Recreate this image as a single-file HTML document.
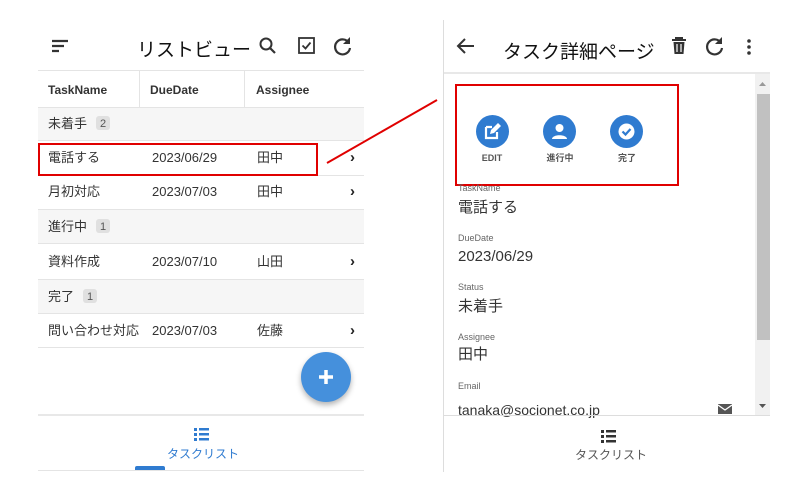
<!DOCTYPE html><html><head><meta charset="utf-8"><style>
*{margin:0;padding:0;box-sizing:border-box}
body{width:800px;height:496px;background:#fff;position:relative;font-family:"Liberation Sans","Noto Sans CJK JP",sans-serif;overflow:hidden;color:#333}
.a{position:absolute;line-height:16px}
.t{font-size:13px;color:#333;line-height:16px}
.row{position:absolute;left:38px;width:326px;border-bottom:1px solid #e4e4e4}
.row span{position:absolute;line-height:16px;white-space:nowrap}
.grp{background:#f6f6f6}
.badge{display:inline-block;background:#e0e0e0;border-radius:3px;padding:0 4px;font-size:11px;line-height:14px;height:14px;margin-left:9px;color:#555;vertical-align:1px}
.chev{left:312px;font-size:15px;font-weight:bold;color:#222}
.lbl{position:absolute;left:458px;font-size:9px;color:#666;line-height:10px}
.val{position:absolute;left:458px;font-size:15px;color:#333;line-height:18px}
.circ{position:absolute;width:33px;height:33px;border-radius:50%;background:#2f7bd0}
.cl{position:absolute;font-size:9px;font-weight:bold;color:#555;width:60px;text-align:center;line-height:10px}
</style></head><body>
<!-- left -->
<svg class="a" style="left:50px;top:38px" width="20" height="16"><path d="M2 3h16M2 8h12M2 13h7" stroke="#333" stroke-width="2.2"/></svg>
<div class="a" style="left:137px;top:39px;font-size:19px;color:#111;line-height:24px">リストビュー</div>
<svg class="a" style="left:258px;top:36px" width="20" height="20"><circle cx="8" cy="8" r="5.5" fill="none" stroke="#333" stroke-width="2"/><path d="M12 12l5 5" stroke="#333" stroke-width="2.2"/></svg>
<svg class="a" style="left:297px;top:36px" width="20" height="20"><rect x="2" y="2" width="15" height="15" fill="none" stroke="#333" stroke-width="1.8"/><path d="M5.5 9.5l3 3 5-6" fill="none" stroke="#333" stroke-width="1.8"/></svg>
<svg class="a" style="left:332px;top:35px" width="22" height="22"><path d="M17 8A7.5 7.5 0 1 0 18 13" fill="none" stroke="#333" stroke-width="2.2"/><path d="M18 2v7h-7z" fill="#333"/></svg>
<div class="a" style="left:38px;top:70px;width:326px;height:1px;background:#e4e4e4"></div>
<div class="row" style="top:71px;height:37px"><span style="left:10px;top:11px;font-size:12px;font-weight:bold">TaskName</span><span style="left:112px;top:11px;font-size:12px;font-weight:bold">DueDate</span><span style="left:218px;top:11px;font-size:12px;font-weight:bold">Assignee</span><div class="a" style="left:101px;top:0;width:1px;height:36px;background:#e4e4e4"></div><div class="a" style="left:206px;top:0;width:1px;height:36px;background:#e4e4e4"></div></div>
<div class="row grp" style="top:108px;height:33px"><span class="t" style="left:10px;top:8px">未着手<span class="badge" style="position:static">2</span></span></div>
<div class="row" style="top:141px;height:35px"><span class="t" style="left:10px;top:9px">電話する</span><span class="t" style="left:114px;top:9px">2023/06/29</span><span class="t" style="left:219px;top:9px">田中</span><span class="chev" style="top:9px">›</span></div>
<div class="row" style="top:176px;height:34px"><span class="t" style="left:10px;top:8px">月初対応</span><span class="t" style="left:114px;top:8px">2023/07/03</span><span class="t" style="left:219px;top:8px">田中</span><span class="chev" style="top:8px">›</span></div>
<div class="row grp" style="top:210px;height:34px"><span class="t" style="left:10px;top:9px">進行中<span class="badge" style="position:static">1</span></span></div>
<div class="row" style="top:244px;height:36px"><span class="t" style="left:10px;top:10px">資料作成</span><span class="t" style="left:114px;top:10px">2023/07/10</span><span class="t" style="left:219px;top:10px">山田</span><span class="chev" style="top:10px">›</span></div>
<div class="row grp" style="top:280px;height:34px"><span class="t" style="left:10px;top:9px">完了<span class="badge" style="position:static">1</span></span></div>
<div class="row" style="top:314px;height:34px"><span class="t" style="left:10px;top:9px">問い合わせ対応</span><span class="t" style="left:114px;top:9px">2023/07/03</span><span class="t" style="left:219px;top:9px">佐藤</span><span class="chev" style="top:9px">›</span></div>
<div class="a" style="left:38px;top:143px;width:280px;height:33px;border:2px solid #e00000"></div>
<div class="a" style="left:301px;top:352px;width:50px;height:50px;border-radius:50%;background:#4590dc;box-shadow:0 3px 6px rgba(0,0,0,.3)"></div>
<svg class="a" style="left:316px;top:367px" width="20" height="20"><path d="M10 3v14M3 10h14" stroke="#fff" stroke-width="3.5"/></svg>
<div class="a" style="left:38px;top:414px;width:326px;height:2px;background:#e8e8e8"></div>
<svg class="a" style="left:192px;top:426px" width="20" height="16"><g fill="#2f7bd0"><rect x="2" y="2" width="3" height="3"/><rect x="7" y="2" width="10" height="2.5"/><rect x="2" y="7" width="3" height="3"/><rect x="7" y="7" width="10" height="2.5"/><rect x="2" y="12" width="3" height="3"/><rect x="7" y="12" width="10" height="2.5"/></g></svg>
<div class="a" style="left:167px;top:446px;font-size:12px;color:#2f7bd0">タスクリスト</div>
<div class="a" style="left:135px;top:466px;width:30px;height:4px;background:#2f7bd0;border-radius:2px 2px 0 0"></div>
<div class="a" style="left:38px;top:470px;width:326px;height:1px;background:#e4e4e4"></div>
<!-- line -->
<svg class="a" style="left:0;top:0" width="800" height="496"><path d="M327 163L437 100" stroke="#e00000" stroke-width="2"/></svg>
<!-- right -->
<div class="a" style="left:443px;top:20px;width:1px;height:452px;background:#ddd"></div>
<svg class="a" style="left:455px;top:36px" width="22" height="20"><path d="M19 10H4M10 3l-7 7 7 7" fill="none" stroke="#333" stroke-width="2"/></svg>
<div class="a" style="left:503px;top:41px;font-size:19px;color:#111;line-height:24px">タスク詳細ページ</div>
<svg class="a" style="left:670px;top:36px" width="18" height="20"><path d="M2 4h14M6 4V2h6v2" stroke="#333" stroke-width="2" fill="none"/><path d="M3.5 6h11l-1 12h-9z" fill="#333"/><path d="M7 8v8M11 8v8" stroke="#fff" stroke-width="1.2"/></svg>
<svg class="a" style="left:704px;top:35px" width="22" height="22"><path d="M17 8A7.5 7.5 0 1 0 18 13" fill="none" stroke="#333" stroke-width="2.2"/><path d="M18 2v7h-7z" fill="#333"/></svg>
<svg class="a" style="left:744px;top:38px" width="10" height="18"><circle cx="5" cy="3" r="1.8" fill="#333"/><circle cx="5" cy="9" r="1.8" fill="#333"/><circle cx="5" cy="15" r="1.8" fill="#333"/></svg>
<div class="a" style="left:444px;top:72px;width:326px;height:2px;background:#e8e8e8"></div>
<div class="a" style="left:755px;top:74px;width:15px;height:341px;background:#f1f1f1"></div>
<div class="a" style="left:757px;top:94px;width:13px;height:246px;background:#c1c1c1"></div>
<svg class="a" style="left:755px;top:78px" width="15" height="335"><path d="M4 8h7l-3.5-4z" fill="#999"/><path d="M4 326h7l-3.5 4z" fill="#555"/></svg>
<div class="circ" style="left:476px;top:115px"></div>
<svg class="a" style="left:482px;top:121px" width="21" height="21"><path d="M4 6h6M4 6v11h11v-6" fill="none" stroke="#fff" stroke-width="2.2"/><path d="M8 13l1-4 7-7 3 3-7 7z" fill="#fff"/></svg>
<div class="circ" style="left:543px;top:115px"></div>
<svg class="a" style="left:549px;top:121px" width="21" height="21"><circle cx="10.5" cy="7" r="4" fill="#fff"/><path d="M3 18c0-5 15-5 15 0z" fill="#fff"/></svg>
<div class="circ" style="left:610px;top:115px"></div>
<svg class="a" style="left:616px;top:121px" width="21" height="21"><circle cx="10.5" cy="10.5" r="8" fill="#fff"/><path d="M6.5 10.5l3 3 5-5.5" fill="none" stroke="#2f7bd0" stroke-width="2.2"/></svg>
<div class="cl" style="left:462px;top:153px">EDIT</div>
<div class="cl" style="left:530px;top:153px">進行中</div>
<div class="cl" style="left:597px;top:153px">完了</div>
<div class="a" style="left:455px;top:84px;width:224px;height:102px;border:2px solid #e00000"></div>
<div class="lbl" style="top:183px">TaskName</div><div class="val" style="top:199px">電話する</div>
<div class="lbl" style="top:233px">DueDate</div><div class="val" style="top:248px">2023/06/29</div>
<div class="lbl" style="top:282px">Status</div><div class="val" style="top:298px">未着手</div>
<div class="lbl" style="top:332px">Assignee</div><div class="val" style="top:346px">田中</div>
<div class="lbl" style="top:381px">Email</div><div class="val" style="top:401px;font-size:14px">tanaka@socionet.co.jp</div>
<svg class="a" style="left:717px;top:403px" width="16" height="12"><rect x="1" y="1" width="14" height="10" fill="#555"/><path d="M1 2l7 5 7-5" fill="none" stroke="#fff" stroke-width="1.3"/></svg>
<div class="a" style="left:444px;top:415px;width:326px;height:1px;background:#ddd"></div>
<svg class="a" style="left:599px;top:428px" width="20" height="16"><g fill="#333"><rect x="2" y="2" width="3" height="3"/><rect x="7" y="2" width="10" height="2.5"/><rect x="2" y="7" width="3" height="3"/><rect x="7" y="7" width="10" height="2.5"/><rect x="2" y="12" width="3" height="3"/><rect x="7" y="12" width="10" height="2.5"/></g></svg>
<div class="a" style="left:575px;top:447px;font-size:12px;color:#555">タスクリスト</div>
</body></html>
